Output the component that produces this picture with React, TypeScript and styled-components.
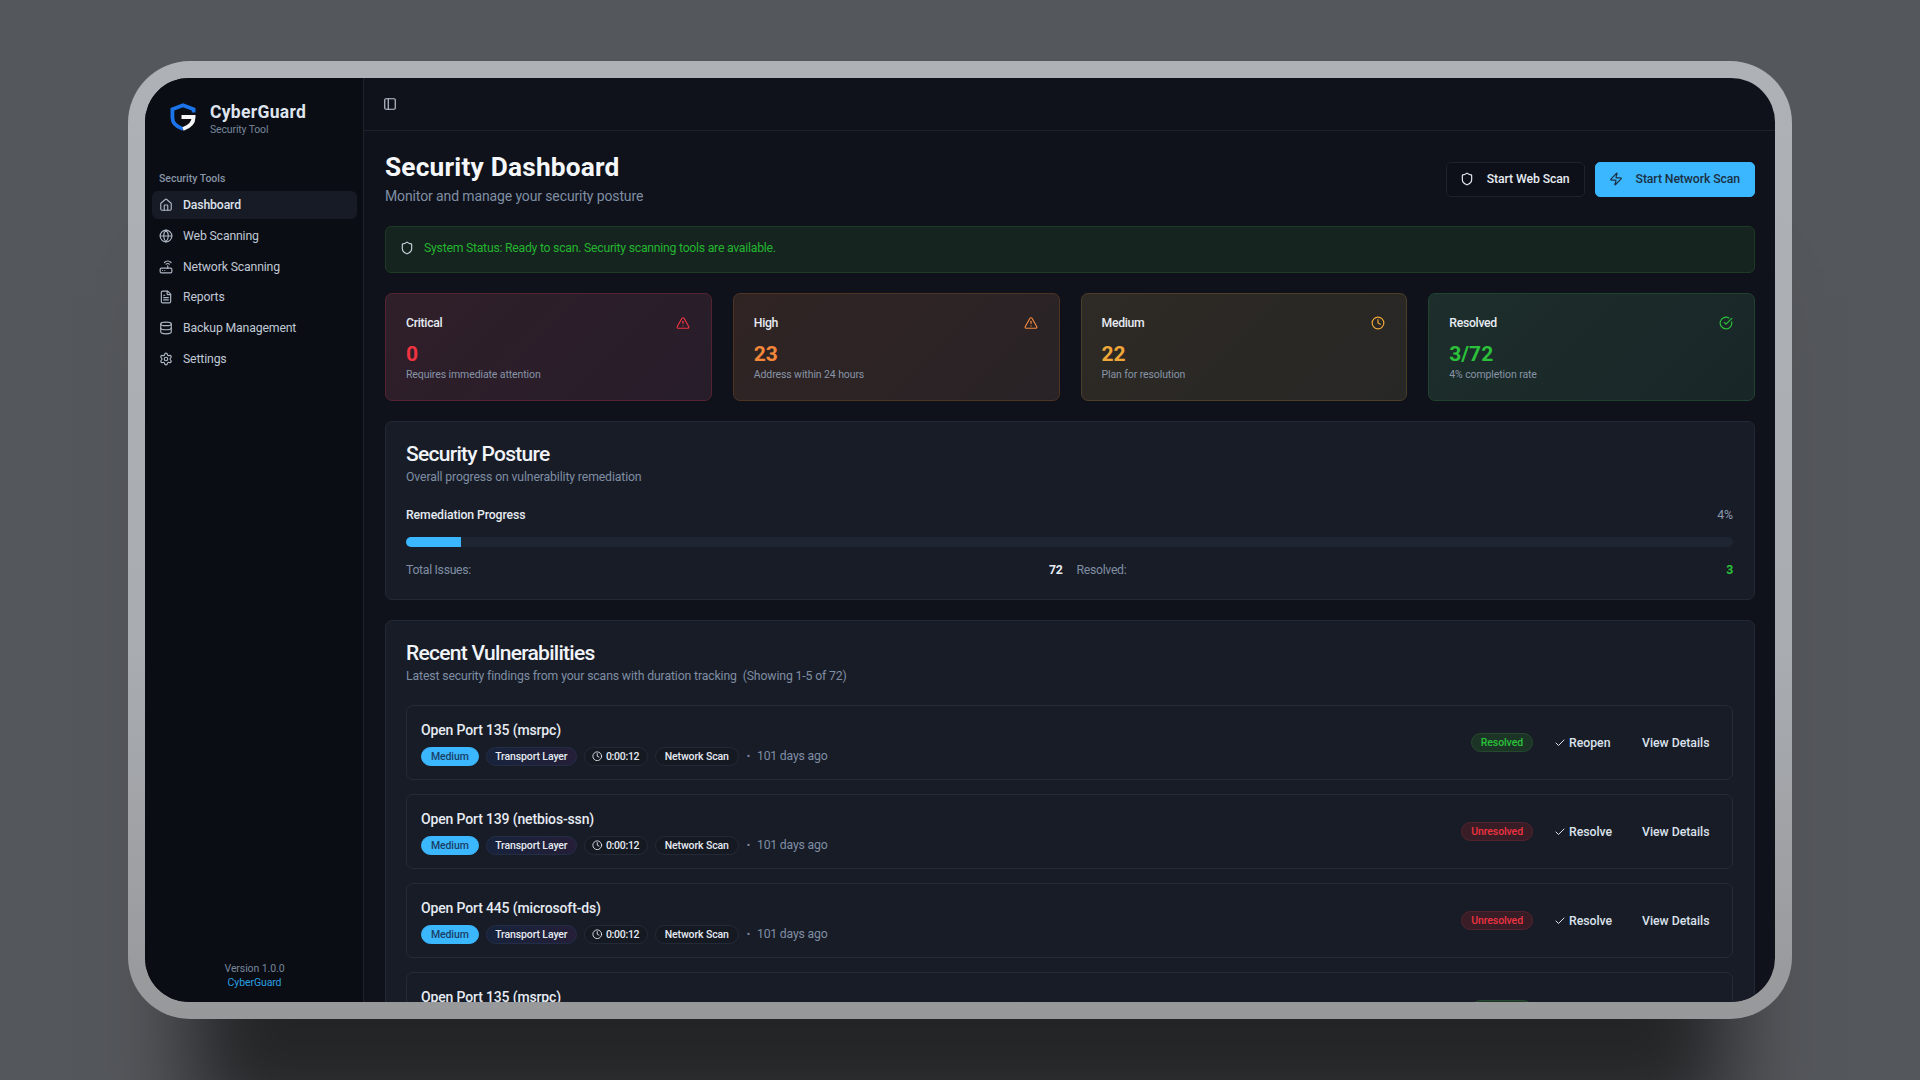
import React from 'react'
import styled, { createGlobalStyle } from 'styled-components'
import {
  Check,
  CircleCheckBig,
  Clock,
  Database,
  FileText,
  Globe,
  Home,
  PanelLeft,
  Router,
  Settings,
  Shield,
  TriangleAlert,
  Zap,
} from 'lucide-react'

const GlobalStyle = createGlobalStyle`
  html, body {
    margin: 0;
    padding: 0;
    background: #54575b;
  }
  * {
    box-sizing: border-box;
  }
  body {
    font-family: 'Roboto', 'Liberation Sans', sans-serif;
  }
`

const Stage = styled.div`
  width: 1920px;
  height: 1080px;
  overflow: hidden;
  background: #54575b;
  padding-top: 61px;
  display: flex;
  justify-content: center;
  align-items: flex-start;
`

const Frame = styled.div`
  width: 1664px;
  height: 958px;
  flex: none;
  padding: 17px;
  border-radius: 62px;
  background: linear-gradient(180deg, #aeb2b7 0%, #a9adb2 60%, #97989a 100%);
  box-shadow: 0 170px 80px -65px rgba(0, 0, 0, 0.58);
`

const Screen = styled.div`
  width: 100%;
  height: 100%;
  border-radius: 44px;
  overflow: hidden;
  display: flex;
  background: #0f121b;
`

const Sidebar = styled.aside`
  width: 219px;
  flex: none;
  display: flex;
  flex-direction: column;
  background: #0a0d14;
  border-right: 1px solid #1c212b;
  padding: 25px 6px 12px 7px;
`

const Brand = styled.div`
  display: flex;
  align-items: center;
  gap: 14px;
  padding-left: 18px;
  height: 28px;
`

const BrandText = styled.div`
  display: flex;
  flex-direction: column;
  padding-top: 4px;
`

const BrandName = styled.div`
  font-size: 17.5px;
  line-height: 20px;
  font-weight: 700;
  letter-spacing: 0.3px;
  color: #dfe5ee;
`

const BrandTag = styled.div`
  font-size: 10.5px;
  line-height: 14px;
  margin-top: 1px;
  letter-spacing: -0.15px;
  color: #78869a;
`

const GroupLabel = styled.div`
  margin-top: 39px;
  padding-left: 7px;
  height: 21px;
  font-size: 10.5px;
  line-height: 18px;
  font-weight: 500;
  color: #8794a6;
`

const Nav = styled.nav`
  display: flex;
  flex-direction: column;
  gap: 2.8px;
`

const NavItem = styled.div<{ $active?: boolean }>`
  height: 28px;
  display: flex;
  align-items: center;
  gap: 10px;
  padding-left: 7px;
  border-radius: 6px;
  font-size: 12.25px;
  letter-spacing: -0.15px;
  font-weight: ${(p) => (p.$active ? 500 : 400)};
  color: ${(p) => (p.$active ? '#dbe2ec' : '#c0c8d4')};
  background: ${(p) => (p.$active ? '#171b26' : 'transparent')};

  svg {
    width: 14px;
    height: 14px;
    color: #aeb7c4;
  }
`

const SidebarFoot = styled.div`
  margin-top: auto;
  text-align: center;
  font-size: 10.5px;
  line-height: 14px;
  letter-spacing: -0.1px;
  color: #78869a;

  span {
    display: block;
    color: #2a9fe0;
  }
`

const Main = styled.main`
  flex: 1;
  min-width: 0;
  display: flex;
  flex-direction: column;
`

const TopBar = styled.header`
  height: 53px;
  flex: none;
  display: flex;
  align-items: center;
  padding-left: 19px;
  border-bottom: 1px solid #1c212b;

  svg {
    width: 14px;
    height: 14px;
    color: #c0c8d4;
  }
`

const Content = styled.div`
  flex: 1;
  min-height: 0;
  overflow: hidden;
  display: flex;
  flex-direction: column;
  gap: 20px;
  padding: 21px 20px 0 21px;
`

const PageHeader = styled.div`
  display: flex;
  align-items: center;
  justify-content: space-between;
  height: 54px;
  flex: none;
`

const PageTitle = styled.h1`
  margin: -2px 0 0;
  font-size: 26.25px;
  line-height: 32px;
  font-weight: 700;
  letter-spacing: 0.2px;
  color: #f5f7fa;
`

const PageSub = styled.p`
  margin: 4px 0 0;
  font-size: 14px;
  line-height: 19px;
  letter-spacing: -0.12px;
  color: #7f8ea3;
`

const HeaderActions = styled.div`
  display: flex;
  gap: 10px;
`

const ScanButton = styled.button<{ $primary?: boolean }>`
  height: 35px;
  display: flex;
  align-items: center;
  gap: 13px;
  padding: 0 14px 0 13px;
  border-radius: 5px;
  font-family: inherit;
  font-size: 12.25px;
  font-weight: 500;
  letter-spacing: -0.1px;
  color: ${(p) => (p.$primary ? '#1b3044' : '#e6ebf2')};
  background: ${(p) => (p.$primary ? '#3bb7ff' : '#0d1018')};
  border: 1px solid ${(p) => (p.$primary ? '#3bb7ff' : '#1d222d')};

  svg {
    width: 14px;
    height: 14px;
  }
`

const StatusBar = styled.div`
  height: 47px;
  flex: none;
  display: flex;
  align-items: center;
  gap: 10px;
  padding: 0 0 3px 14px;
  border-radius: 6px;
  background: #16241f;
  border: 1px solid #1f3a24;
  font-size: 12.25px;
  letter-spacing: -0.25px;
  color: #23b52f;

  svg {
    width: 14px;
    height: 14px;
    color: #c6ced9;
  }
`

const StatGrid = styled.div`
  display: grid;
  grid-template-columns: repeat(4, 1fr);
  gap: 21px;
  flex: none;
`

const tones = {
  critical: { from: '#2f1f29', to: '#271d2a', line: '#532430', value: '#ef3340' },
  high: { from: '#302423', to: '#292327', line: '#4e3323', value: '#f5873a' },
  medium: { from: '#2e2a25', to: '#272725', line: '#4d3e2a', value: '#f0a73a' },
  resolved: { from: '#1d2e2b', to: '#192628', line: '#1f432f', value: '#2bc13a' },
}

type Tone = keyof typeof tones

const StatCard = styled.div<{ $tone: Tone }>`
  height: 108px;
  padding: 20px 21px 20px 20px;
  border-radius: 7px;
  background: linear-gradient(135deg, ${(p) => tones[p.$tone].from}, ${(p) => tones[p.$tone].to});
  border: 1px solid ${(p) => tones[p.$tone].line};
`

const StatHead = styled.div<{ $tone: Tone }>`
  display: flex;
  align-items: center;
  justify-content: space-between;
  height: 18px;
  font-size: 12.25px;
  font-weight: 500;
  letter-spacing: -0.3px;
  color: #e6ebf2;

  svg {
    width: 14px;
    height: 14px;
    color: ${(p) => tones[p.$tone].value};
  }
`

const StatValue = styled.div<{ $tone: Tone }>`
  margin-top: 9px;
  font-size: 21px;
  line-height: 26px;
  font-weight: 700;
  color: ${(p) => tones[p.$tone].value};
`

const StatNote = styled.div`
  font-size: 10.5px;
  line-height: 14px;
  margin-top: 0.5px;
  letter-spacing: -0.1px;
  color: #8794a6;
`

const Panel = styled.section`
  flex: none;
  padding: 21px 21px 20px 20px;
  border-radius: 7px;
  background: #181c27;
  border: 1px solid #222835;
`

const PanelTitle = styled.h2`
  margin: 0;
  font-size: 21px;
  line-height: 23px;
  font-weight: 500;
  letter-spacing: -0.72px;
  color: #f1f4f8;
`

const PanelSub = styled.p`
  margin: 2px 0 20px;
  font-size: 12.25px;
  line-height: 18px;
  letter-spacing: -0.13px;
  color: #7f8ea3;
`

const ProgressHead = styled.div`
  display: flex;
  justify-content: space-between;
  font-size: 12.25px;
  line-height: 18px;
  color: #8d9bb0;

  strong {
    font-weight: 500;
    letter-spacing: -0.1px;
    color: #e6ebf2;
  }
`

const Track = styled.div`
  margin: 13px 0 14px;
  height: 10px;
  border-radius: 5px;
  overflow: hidden;
  background: #1f2633;
`

const Fill = styled.div`
  height: 100%;
  background: #3bb7ff;
`

const TotalsGrid = styled.div`
  display: grid;
  grid-template-columns: 1fr 1fr;
  gap: 14px;
`

const TotalRow = styled.div`
  display: flex;
  justify-content: space-between;
  font-size: 12.25px;
  line-height: 18px;
  letter-spacing: -0.3px;
  color: #7f8ea3;
`

const TotalValue = styled.span<{ $green?: boolean }>`
  font-weight: 700;
  color: ${(p) => (p.$green ? '#2bc13a' : '#e6ebf2')};
`

const VulnList = styled.div`
  display: flex;
  flex-direction: column;
  gap: 14px;
`

const VulnItem = styled.div`
  display: flex;
  align-items: center;
  justify-content: space-between;
  height: 75px;
  padding: 14px 22.5px 14px 14px;
  border-radius: 7px;
  border: 1px solid #252b38;
`

const VulnTitle = styled.div`
  font-size: 14px;
  line-height: 20px;
  font-weight: 500;
  letter-spacing: -0.15px;
  color: #e6ebf2;
`

const MetaRow = styled.div`
  margin-top: 7px;
  display: flex;
  align-items: center;
  gap: 7px;
`

const Pill = styled.span<{ $kind?: 'medium' | 'layer' }>`
  height: 19px;
  display: inline-flex;
  align-items: center;
  gap: 3px;
  padding: 0 ${(p) => (p.$kind === 'layer' ? '8.5px' : '9px')};
  border-radius: 10px;
  font-size: 10.5px;
  font-weight: 500;
  letter-spacing: -0.12px;
  color: ${(p) => (p.$kind === 'medium' ? '#1a3f66' : '#e6ebf2')};
  background: ${(p) =>
    p.$kind === 'medium'
      ? '#3bb7ff'
      : p.$kind === 'layer'
        ? 'linear-gradient(90deg, #17233b, #251e38)'
        : '#151922'};
  border: 1px solid
    ${(p) => (p.$kind === 'medium' ? '#3bb7ff' : p.$kind === 'layer' ? '#232d45' : '#232936')};

  svg {
    width: 10.5px;
    height: 10.5px;
  }
`

const TimePill = styled(Pill)`
  padding: 0 7.5px;
  letter-spacing: -0.3px;
`

const Age = styled.span`
  font-size: 12.25px;
  letter-spacing: -0.2px;
  color: #7f8ea3;

  &::before {
    content: '•';
    margin: 0 7px 0 1px;
    font-size: 10px;
  }
`

const ItemActions = styled.div`
  display: flex;
  align-items: center;
  font-size: 12.25px;
  font-weight: 500;
  color: #dbe2ec;
`

const StatePill = styled.span<{ $done: boolean }>`
  height: 19px;
  display: inline-flex;
  align-items: center;
  padding: 0 9px;
  border-radius: 10px;
  font-size: 10.5px;
  font-weight: 500;
  letter-spacing: -0.1px;
  color: ${(p) => (p.$done ? '#2bc13a' : '#ef3340')};
  background: ${(p) => (p.$done ? '#1b3426' : '#381d27')};
  border: 1px solid ${(p) => (p.$done ? '#25482f' : '#55232f')};
`

const ToggleAction = styled.span`
  display: inline-flex;
  align-items: center;
  gap: 3px;
  margin-left: 21px;
  width: 57px;

  svg {
    width: 12px;
    height: 12px;
    flex: none;
  }
`

const DetailsAction = styled.span`
  margin-left: 31px;
`

const BrandLogo = () => (
  <svg width="26" height="28" viewBox="0 0 26 28" fill="none" style={{ flex: 'none' }}>
    <path
      d="M23.6 9.4V6.2L13 2.2 2.4 6.2V14.5C2.4 20 7 24 13 26"
      stroke="#1b74ea"
      strokeWidth="3.8"
    />
    <path d="M11.5 14H23.6C23.6 20 19 24 13 26" stroke="#f4f6f8" strokeWidth="3.8" />
  </svg>
)

const navItems = [
  { label: 'Dashboard', icon: Home, active: true },
  { label: 'Web Scanning', icon: Globe },
  { label: 'Network Scanning', icon: Router },
  { label: 'Reports', icon: FileText },
  { label: 'Backup Management', icon: Database },
  { label: 'Settings', icon: Settings },
]

const stats: { tone: Tone; label: string; value: string; note: string; icon: typeof Clock }[] = [
  { tone: 'critical', label: 'Critical', value: '0', note: 'Requires immediate attention', icon: TriangleAlert },
  { tone: 'high', label: 'High', value: '23', note: 'Address within 24 hours', icon: TriangleAlert },
  { tone: 'medium', label: 'Medium', value: '22', note: 'Plan for resolution', icon: Clock },
  { tone: 'resolved', label: 'Resolved', value: '3/72', note: '4% completion rate', icon: CircleCheckBig },
]

const vulns = [
  { title: 'Open Port 135 (msrpc)', done: true },
  { title: 'Open Port 139 (netbios-ssn)', done: false },
  { title: 'Open Port 445 (microsoft-ds)', done: false },
  { title: 'Open Port 135 (msrpc)', done: true },
]

const App: React.FC = () => {
  return (
    <Stage>
      <GlobalStyle />
      <Frame>
        <Screen>
          <Sidebar>
            <Brand>
              <BrandLogo />
              <BrandText>
                <BrandName>CyberGuard</BrandName>
                <BrandTag>Security Tool</BrandTag>
              </BrandText>
            </Brand>
            <GroupLabel>Security Tools</GroupLabel>
            <Nav>
              {navItems.map((item) => (
                <NavItem key={item.label} $active={item.active}>
                  <item.icon strokeWidth={2} />
                  {item.label}
                </NavItem>
              ))}
            </Nav>
            <SidebarFoot>
              Version 1.0.0
              <span>CyberGuard</span>
            </SidebarFoot>
          </Sidebar>
          <Main>
            <TopBar>
              <PanelLeft strokeWidth={2} />
            </TopBar>
            <Content>
              <PageHeader>
                <div>
                  <PageTitle>Security Dashboard</PageTitle>
                  <PageSub>Monitor and manage your security posture</PageSub>
                </div>
                <HeaderActions>
                  <ScanButton>
                    <Shield strokeWidth={2} />
                    Start Web Scan
                  </ScanButton>
                  <ScanButton $primary>
                    <Zap strokeWidth={2} />
                    Start Network Scan
                  </ScanButton>
                </HeaderActions>
              </PageHeader>

              <StatusBar>
                <Shield strokeWidth={2} />
                System Status: Ready to scan. Security scanning tools are available.
              </StatusBar>

              <StatGrid>
                {stats.map((s) => (
                  <StatCard key={s.label} $tone={s.tone}>
                    <StatHead $tone={s.tone}>
                      {s.label}
                      <s.icon strokeWidth={2} />
                    </StatHead>
                    <StatValue $tone={s.tone}>{s.value}</StatValue>
                    <StatNote>{s.note}</StatNote>
                  </StatCard>
                ))}
              </StatGrid>

              <Panel>
                <PanelTitle>Security Posture</PanelTitle>
                <PanelSub>Overall progress on vulnerability remediation</PanelSub>
                <ProgressHead>
                  <strong>Remediation Progress</strong>
                  <span>4%</span>
                </ProgressHead>
                <Track>
                  <Fill style={{ width: `${(3 / 72) * 100}%` }} />
                </Track>
                <TotalsGrid>
                  <TotalRow>
                    Total Issues:
                    <TotalValue>72</TotalValue>
                  </TotalRow>
                  <TotalRow>
                    Resolved:
                    <TotalValue $green>3</TotalValue>
                  </TotalRow>
                </TotalsGrid>
              </Panel>

              <Panel>
                <PanelTitle>Recent Vulnerabilities</PanelTitle>
                <PanelSub>
                  Latest security findings from your scans with duration tracking&nbsp;&nbsp;(Showing 1-5 of 72)
                </PanelSub>
                <VulnList>
                  {vulns.map((v, i) => (
                    <VulnItem key={i}>
                      <div>
                        <VulnTitle>{v.title}</VulnTitle>
                        <MetaRow>
                          <Pill $kind="medium">Medium</Pill>
                          <Pill $kind="layer">Transport Layer</Pill>
                          <TimePill>
                            <Clock strokeWidth={2} />
                            0:00:12
                          </TimePill>
                          <Pill>Network Scan</Pill>
                          <Age>101 days ago</Age>
                        </MetaRow>
                      </div>
                      <ItemActions>
                        <StatePill $done={v.done}>{v.done ? 'Resolved' : 'Unresolved'}</StatePill>
                        <ToggleAction>
                          <Check strokeWidth={2} />
                          {v.done ? 'Reopen' : 'Resolve'}
                        </ToggleAction>
                        <DetailsAction>View Details</DetailsAction>
                      </ItemActions>
                    </VulnItem>
                  ))}
                </VulnList>
              </Panel>
            </Content>
          </Main>
        </Screen>
      </Frame>
    </Stage>
  )
}

export default App
